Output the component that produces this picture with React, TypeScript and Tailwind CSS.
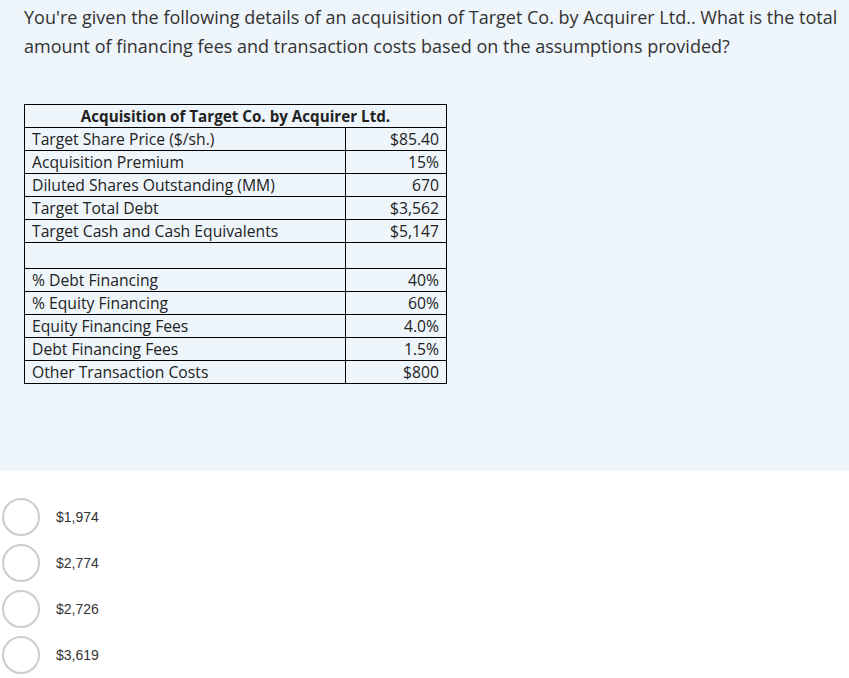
import React from "react";

const rows1: [string, string][] = [
  ["Target Share Price ($/sh.)", "$85.40"],
  ["Acquisition Premium", "15%"],
  ["Diluted Shares Outstanding (MM)", "670"],
  ["Target Total Debt", "$3,562"],
  ["Target Cash and Cash Equivalents", "$5,147"],
];
const rows2: [string, string][] = [
  ["% Debt Financing", "40%"],
  ["% Equity Financing", "60%"],
  ["Equity Financing Fees", "4.0%"],
  ["Debt Financing Fees", "1.5%"],
  ["Other Transaction Costs", "$800"],
];

function Row({ a, b }: { a: string; b: string }) {
  return (
    <tr className="h-[23px]">
      <td className="border border-black pl-[7px] pr-1 py-0 leading-[22px] whitespace-nowrap">{a}</td>
      <td className="border border-black pr-[7px] py-0 text-right leading-[22px]">{b}</td>
    </tr>
  );
}

export default function App() {
  return (
    <div className="w-[849px] h-[678px] bg-white text-[#333]" style={{ fontFamily: "'Open Sans', sans-serif" }}>
      <div className="bg-[#eef5fb] h-[471px] pl-[24px] pt-[3px]">
        <p className="text-[18px] leading-[29px] text-[#333] m-0 pr-1">
          You're given the following details of an acquisition of Target Co. by Acquirer Ltd.. What is the total amount of financing fees and transaction costs based on the assumptions provided?
        </p>
        <table className="mt-[43px] border-collapse text-[15.7px] text-[#222] w-[423px]">
          <colgroup>
            <col className="w-[322px]" />
            <col className="w-[101px]" />
          </colgroup>
          <tbody>
            <tr className="h-[23px]">
              <td colSpan={2} className="border border-black text-center font-bold text-[15.2px] leading-[22px] py-0">
                Acquisition of Target Co. by Acquirer Ltd.
              </td>
            </tr>
            {rows1.map(([a, b]) => (
              <Row key={a} a={a} b={b} />
            ))}
            <tr className="h-[26px]">
              <td className="border border-black"></td>
              <td className="border border-black"></td>
            </tr>
            {rows2.map(([a, b]) => (
              <Row key={a} a={a} b={b} />
            ))}
          </tbody>
        </table>
      </div>
      <div className="flex flex-col pt-[27px] gap-[8px]" style={{ fontFamily: "'Liberation Sans', Arial, sans-serif" }}>
        {["$1,974", "$2,774", "$2,726", "$3,619"].map((v) => (
          <div key={v} className="flex items-center h-[38px]">
            <div className="ml-[2px] w-[38px] h-[38px] rounded-full border-2 border-[#cccccc] bg-white"></div>
            <span className="ml-[16px] text-[14px] text-[#333]">{v}</span>
          </div>
        ))}
      </div>
    </div>
  );
}
